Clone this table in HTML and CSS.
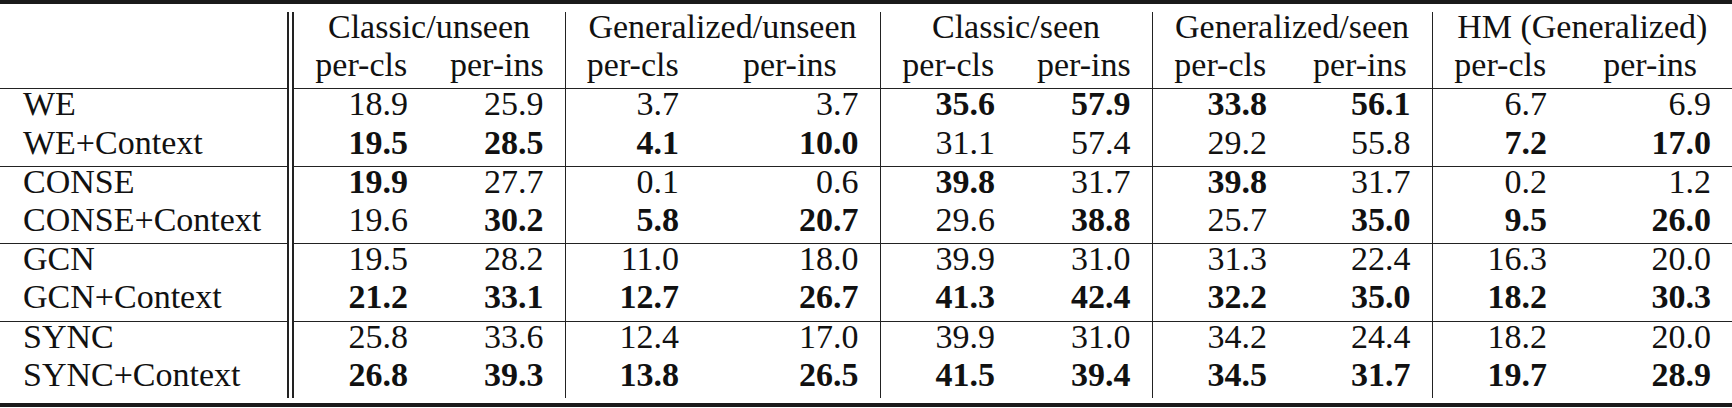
FILE: index.html
```html
<!DOCTYPE html>
<html>
  <head>
    <title>Zero-shot results</title>
    <meta name="viewport" content="width=device-width, initial-scale=1.0">
    <link rel="stylesheet" href="styles.css">
  </head>
  <body>
    <div class="rules">
      <table class="results">
        <colgroup>
          <col class="c-name">
          <col class="c-first">
          <col class="c-136">
          <col class="c-135">
          <col class="c-wide">
          <col class="c-136">
          <col class="c-136">
          <col class="c-136">
          <col class="c-144">
          <col class="c-136">
          <col class="c-last">
        </colgroup>
        <thead>
          <tr>
            <th class="name" rowspan="2"></th>
            <th class="sep" colspan="2">Classic/unseen</th>
            <th class="sep" colspan="2">Generalized/unseen</th>
            <th class="sep" colspan="2">Classic/seen</th>
            <th class="sep" colspan="2">Generalized/seen</th>
            <th colspan="2">HM (Generalized)</th>
          </tr>
          <tr>
            <th>per-cls</th><th class="sep">per-ins</th>
            <th>per-cls</th><th class="sep">per-ins</th>
            <th>per-cls</th><th class="sep">per-ins</th>
            <th>per-cls</th><th class="sep">per-ins</th>
            <th>per-cls</th><th>per-ins</th>
          </tr>
        </thead>
        <tbody>
          <tr>
            <td class="name">WE</td>
            <td>18.9</td><td class="sep">25.9</td>
            <td>3.7</td><td class="sep">3.7</td>
            <td class="best">35.6</td><td class="sep best">57.9</td>
            <td class="best">33.8</td><td class="sep best">56.1</td>
            <td>6.7</td><td>6.9</td>
          </tr>
          <tr>
            <td class="name">WE+Context</td>
            <td class="best">19.5</td><td class="sep best">28.5</td>
            <td class="best">4.1</td><td class="sep best">10.0</td>
            <td>31.1</td><td class="sep">57.4</td>
            <td>29.2</td><td class="sep">55.8</td>
            <td class="best">7.2</td><td class="best">17.0</td>
          </tr>
        </tbody>
        <tbody>
          <tr>
            <td class="name">CONSE</td>
            <td class="best">19.9</td><td class="sep">27.7</td>
            <td>0.1</td><td class="sep">0.6</td>
            <td class="best">39.8</td><td class="sep">31.7</td>
            <td class="best">39.8</td><td class="sep">31.7</td>
            <td>0.2</td><td>1.2</td>
          </tr>
          <tr>
            <td class="name">CONSE+Context</td>
            <td>19.6</td><td class="sep best">30.2</td>
            <td class="best">5.8</td><td class="sep best">20.7</td>
            <td>29.6</td><td class="sep best">38.8</td>
            <td>25.7</td><td class="sep best">35.0</td>
            <td class="best">9.5</td><td class="best">26.0</td>
          </tr>
        </tbody>
        <tbody>
          <tr>
            <td class="name">GCN</td>
            <td>19.5</td><td class="sep">28.2</td>
            <td>11.0</td><td class="sep">18.0</td>
            <td>39.9</td><td class="sep">31.0</td>
            <td>31.3</td><td class="sep">22.4</td>
            <td>16.3</td><td>20.0</td>
          </tr>
          <tr>
            <td class="name">GCN+Context</td>
            <td class="best">21.2</td><td class="sep best">33.1</td>
            <td class="best">12.7</td><td class="sep best">26.7</td>
            <td class="best">41.3</td><td class="sep best">42.4</td>
            <td class="best">32.2</td><td class="sep best">35.0</td>
            <td class="best">18.2</td><td class="best">30.3</td>
          </tr>
        </tbody>
        <tbody>
          <tr>
            <td class="name">SYNC</td>
            <td>25.8</td><td class="sep">33.6</td>
            <td>12.4</td><td class="sep">17.0</td>
            <td>39.9</td><td class="sep">31.0</td>
            <td>34.2</td><td class="sep">24.4</td>
            <td>18.2</td><td>20.0</td>
          </tr>
          <tr>
            <td class="name">SYNC+Context</td>
            <td class="best">26.8</td><td class="sep best">39.3</td>
            <td class="best">13.8</td><td class="sep best">26.5</td>
            <td class="best">41.5</td><td class="sep best">39.4</td>
            <td class="best">34.5</td><td class="sep best">31.7</td>
            <td class="best">19.7</td><td class="best">28.9</td>
          </tr>
        </tbody>
      </table>
    </div>
  </body>
</html>
```

FILE: styles.css
```css
body{
  margin: 0;
  background-color: white;
  font-family: "Liberation Serif";
  color: #111;
}

/* top and bottom rules sit a little away from the table */
.rules{
  width: 1732px;
  border-top: 4px solid #1a1a1a;
  border-bottom: 4px solid #1a1a1a;
  padding-top: 8px;
  padding-bottom: 5px;
}

.results{
  width: 1732px;
  table-layout: fixed;
  border-collapse: collapse;
  font-family: "Liberation Serif";
  font-size: 34px;
  line-height: 30.2px;
}

.c-name{ width: 290px; }
.c-first{ width: 139px; }
.c-136{ width: 136px; }
.c-135{ width: 135px; }
.c-wide{ width: 180px; }
.c-144{ width: 144px; }
.c-last{ width: 164px; }

.results th,
.results td{
  padding: 0 21px 8px 21px;
  white-space: nowrap;
  font-family: "Liberation Serif";
}

.results th{
  font-weight: normal;
  text-align: center;
}

.results td{
  text-align: right;
}

.results .name{
  text-align: left;
  padding-left: 23px;
  border-right: 7px double #222;
}

.results .sep{
  border-right: 1px solid #222;
}

.results tbody{
  border-top: 1px solid #222;
}

.best{
  font-weight: bold;
}
```
